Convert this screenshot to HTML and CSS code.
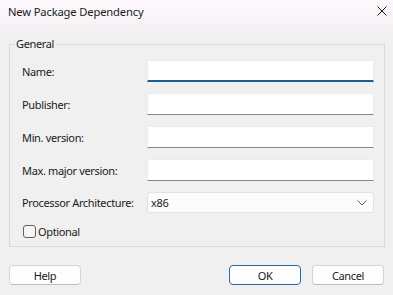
FILE: index.html
```html
<!DOCTYPE html>
<html lang="en">
<head>
  <meta charset="UTF-8">
  <title>New Package Dependency</title>
  <link rel="stylesheet" href="styles.css">
</head>
<body>
  <div class="titlebar">
    <span class="title">New Package Dependency</span>
    <span class="close">
      <svg width="10" height="10" viewBox="0 0 10 10"><path d="M0.5 0.5 L9.5 9.5 M9.5 0.5 L0.5 9.5" stroke="#1a1a1a" stroke-width="1" fill="none"/></svg>
    </span>
  </div>

  <fieldset class="group">
    <legend>General</legend>
    <div class="form-grid">
      <label>Name:</label>
      <div class="field focused"></div>

      <label>Publisher:</label>
      <div class="field"></div>

      <label>Min. version:</label>
      <div class="field"></div>

      <label>Max. major version:</label>
      <div class="field"></div>

      <label>Processor Architecture:</label>
      <div class="combo">
        <span>x86</span>
        <svg width="10" height="6" viewBox="0 0 10 6"><path d="M0.5 0.5 L5 5 L9.5 0.5" stroke="#5c5c5c" stroke-width="1" fill="none"/></svg>
      </div>
    </div>

    <div class="check-row">
      <span class="checkbox"></span>
      <span>Optional</span>
    </div>
  </fieldset>

  <div class="buttons">
    <button class="btn">Help</button>
    <span class="spacer"></span>
    <button class="btn default">OK</button>
    <button class="btn">Cancel</button>
  </div>
</body>
</html>
```

FILE: styles.css
```css
* {
  box-sizing: border-box;
}
body {
  margin: 0;
  width: 393px;
  height: 295px;
  background: linear-gradient(#fcf8fc 0px, #f7f3f7 22px, #f0f0f0 40px);
  font-family: "Noto Sans", "Open Sans", sans-serif;
  font-size: 11px;
  letter-spacing: -0.35px;
  color: #1a1a1a;
  overflow: hidden;
  white-space: nowrap;
}
.titlebar {
  height: 30px;
  display: flex;
  align-items: center;
  justify-content: space-between;
  padding: 0 6px 8px 8px;
}
.title {
  font-size: 11.2px;
  letter-spacing: -0.15px;
}
.close {
  display: flex;
  width: 10px;
  height: 10px;
}
.group {
  margin: 6px 8px 0 9px;
  padding: 8px 10px 7px 12px;
  border: 1px solid #dadada;
  min-width: 0;
}
.group legend {
  padding: 0 2px;
  margin-left: -8px;
  line-height: 16px;
}
.form-grid {
  display: grid;
  grid-template-columns: 125px 1fr;
  grid-template-rows: 22px 22px 22px 22px 21px;
  row-gap: 11px;
  align-items: center;
}
.field {
  height: 22px;
  background: #fff;
  border: 1px solid #ececec;
  border-bottom: 1px solid #858585;
}
.field.focused {
  border-bottom: 2px solid #1b5e94;
}
.combo {
  height: 21px;
  background: #fcfcfc;
  border: 1px solid #e2e2e2;
  border-radius: 3px;
  display: flex;
  align-items: center;
  justify-content: space-between;
  padding: 0 6px 0 3px;
}
.check-row {
  margin-top: 11px;
  height: 15px;
  display: flex;
  align-items: center;
  gap: 2px;
  padding-left: 1px;
}
.checkbox {
  width: 13px;
  height: 13px;
  border: 1px solid #616161;
  border-radius: 3px;
  background: #f6f6f6;
}
.buttons {
  display: flex;
  margin-top: 18px;
  padding: 0 9px;
  gap: 11px;
}
.spacer {
  flex: 1;
}
.btn {
  width: 72px;
  height: 20px;
  padding: 0;
  font-family: inherit;
  font-size: 11px;
  letter-spacing: -0.35px;
  color: #1a1a1a;
  background: #fdfdfd;
  border: 1px solid #d4d4d4;
  border-bottom-color: #bcbcbc;
  border-radius: 4px;
}
.btn.default {
  border: 1px solid #2d6aa0;
}
```
